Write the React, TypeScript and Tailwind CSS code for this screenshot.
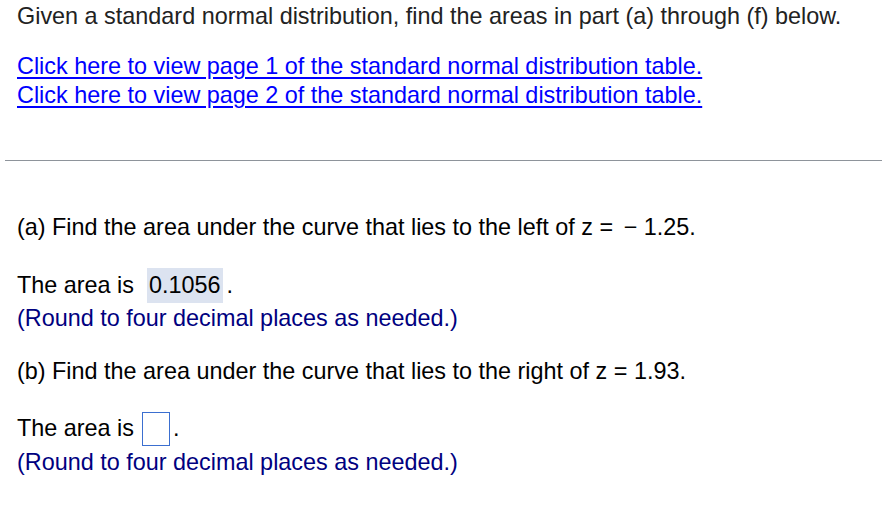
export default function App() {
  return (
    <div className="min-h-[528px] w-[882px] bg-white font-['Liberation_Sans',Arial,sans-serif] text-[23.4px]">
      <div className="pl-[17px] pt-[2px] leading-[29px] text-[#222222]">
        Given a standard normal distribution, find the areas in part (a) through (f) below.
      </div>

      <div className="mt-[21px] flex flex-col pl-[17px] leading-[29px]">
        <a href="#" className="w-fit text-[#0000ff] underline underline-offset-[3px]">
          Click here to view page 1 of the standard normal distribution table.
        </a>
        <a href="#" className="w-fit text-[#0000ff] underline underline-offset-[3px]">
          Click here to view page 2 of the standard normal distribution table.
        </a>
      </div>

      <div className="ml-[5px] mt-[50px] h-px bg-[#8e949b]" />

      <div className="pl-[17px] text-black">
        <div className="mt-[52px] leading-[29px]">
          (a) Find the area under the curve that lies to the left of z = <span className="ml-[4px]">&minus;</span> 1.25.
        </div>

        <div className="mt-[26px] flex h-[35px] items-center">
          <span>The area is</span>
          <span className="ml-[13px] flex h-[35px] items-center bg-[#dce3f0] px-[2px]">0.1056</span>
          <span className="ml-[4px]">.</span>
        </div>
        <div className="mt-[1px] leading-[29px] text-[#000080]">(Round to four decimal places as needed.)</div>

        <div className="mt-[24px] leading-[29px]">
          (b) Find the area under the curve that lies to the right of z = 1.93.
        </div>

        <div className="mt-[26px] flex h-[34px] items-center">
          <span>The area is</span>
          <span className="ml-[8px] h-[34px] w-[28px] border border-[#3b6fd0] bg-white" />
          <span className="ml-[3px]">.</span>
        </div>
        <div className="mt-[2px] leading-[29px] text-[#000080]">(Round to four decimal places as needed.)</div>
      </div>
    </div>
  );
}
